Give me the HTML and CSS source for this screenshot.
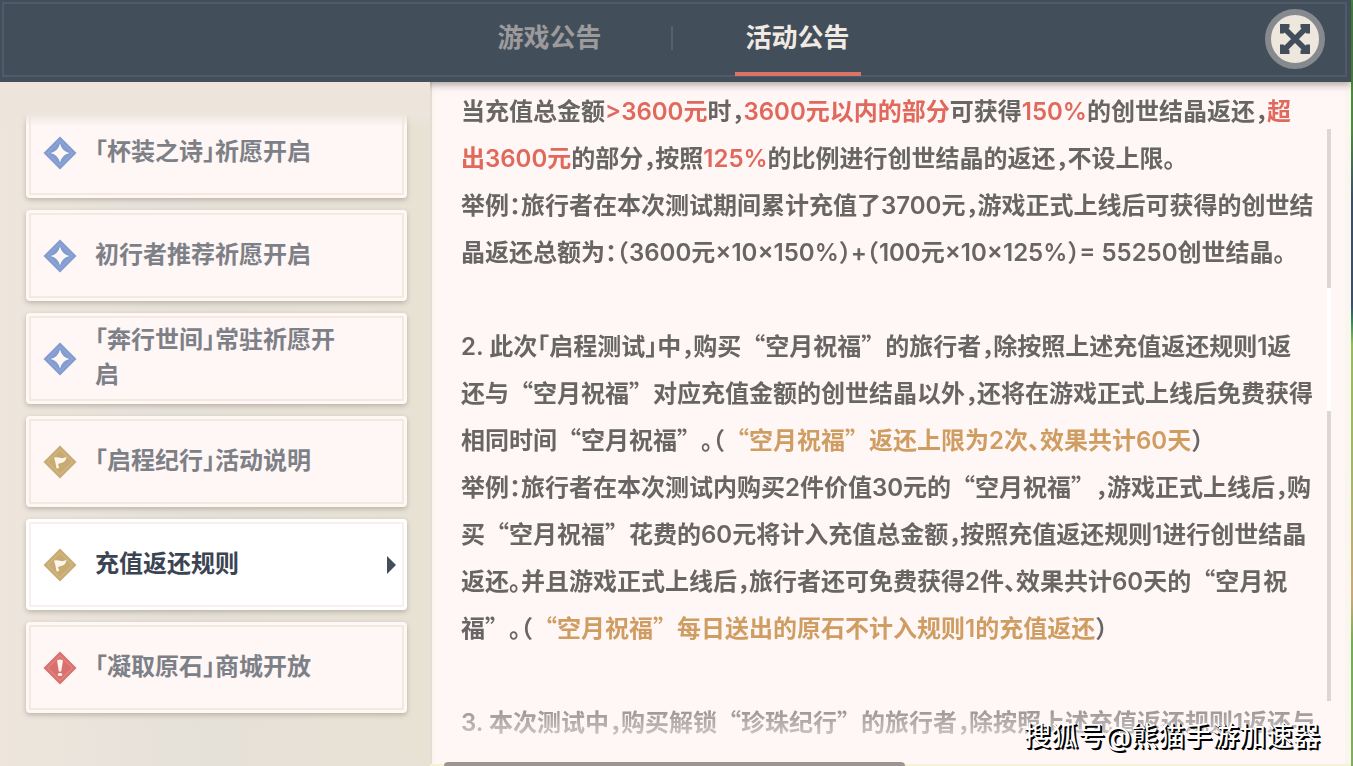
FILE: index.html
```html
<!DOCTYPE html>
<html lang="zh-CN">
<head>
    <meta charset="UTF-8">
    <meta name="viewport" content="width=device-width, initial-scale=1.0">
    <title>活动公告</title>
    <link rel="stylesheet" href="styles.css">
</head>
<body>
    <!-- 图标 -->
    <svg class="icon-defs" width="0" height="0">
        <symbol id="icon-star" viewBox="0 0 34 34">
            <path fill="#829bd0" d="M17 0.5 33.5 17 17 33.5 0.5 17Z"/>
            <path fill="none" stroke="#98add9" stroke-width="1" d="M17 4.500 29.500 17 17 29.500 4.500 17Z"/>
            <path fill="#fdf8f3" d="M17 7.5Q18.8 15.2 26.5 17 18.8 18.8 17 26.5 15.2 18.8 7.5 17 15.2 15.2 17 7.5Z"/>
        </symbol>
        <symbol id="icon-flag" viewBox="0 0 34 34">
            <path fill="#c8ab72" d="M17 0.5 33.5 17 17 33.5 0.5 17Z"/>
            <path fill="none" stroke="#d6be8d" stroke-width="1" d="M17 4.500 29.500 17 17 29.500 4.500 17Z"/>
            <path fill="#fdf6ea" d="M11 12.6Q14 11.6 17 12.8 20 14 23.5 11.8 22.8 17 19 17.8 16.5 18.2 15 19.2L16.2 23 13.6 23.4Q12.600 17 11 12.600Z"/>
        </symbol>
        <symbol id="icon-alert" viewBox="0 0 34 34">
            <path fill="#da706d" d="M17 0.5 33.5 17 17 33.5 0.5 17Z"/>
            <path fill="none" stroke="#e69692" stroke-width="1" d="M17 4.5 29.5 17 17 29.5 4.5 17Z"/>
            <path fill="#fff3ee" d="M14 9.5Q17 7.6 20 9.5L18.200 20.500H15.800Z"/>
            <ellipse fill="#fff3ee" cx="17" cy="23.600" rx="2.400" ry="1.500"/>
        </symbol>
    </svg>

    <div class="notice">
        <header class="header">
            <nav class="tabs">
                <button class="tab" type="button">游戏公告</button>
                <span class="tab-line"></span>
                <button class="tab active" type="button">活动公告</button>
            </nav>
            <button class="close" type="button" aria-label="关闭">
                <svg viewBox="0 0 30 30" width="30" height="30">
                    <path stroke="#434e5b" stroke-width="5.6" d="M5 5 25 25M25 5 5 25"/>
                    <path fill="#434e5b" d="M0 0H9.500V3.500L3.500 9.500H0ZM30 0V9.500H26.500L20.500 3.500V0ZM0 30V20.500H3.500L9.500 26.500V30ZM30 30H20.500V26.500L26.500 20.500H30Z"/>
                </svg>
            </button>
        </header>

        <main class="main">
            <!-- 左侧公告列表 -->
            <nav class="sidebar">
                <button class="item" type="button">
                    <svg class="item-icon"><use href="#icon-star"/></svg>
                    <span class="item-text">「杯装之诗」祈愿开启</span>
                </button>
                <button class="item" type="button">
                    <svg class="item-icon"><use href="#icon-star"/></svg>
                    <span class="item-text">初行者推荐祈愿开启</span>
                </button>
                <button class="item" type="button">
                    <svg class="item-icon"><use href="#icon-star"/></svg>
                    <span class="item-text">「奔行世间」常驻祈愿开启</span>
                </button>
                <button class="item" type="button">
                    <svg class="item-icon"><use href="#icon-flag"/></svg>
                    <span class="item-text">「启程纪行」活动说明</span>
                </button>
                <button class="item active" type="button">
                    <svg class="item-icon"><use href="#icon-flag"/></svg>
                    <span class="item-text">充值返还规则</span>
                    <span class="item-arrow"></span>
                </button>
                <button class="item" type="button">
                    <svg class="item-icon"><use href="#icon-alert"/></svg>
                    <span class="item-text">「凝取原石」商城开放</span>
                </button>
            </nav>

            <!-- 右侧公告内容 -->
            <section class="panel">
                <article class="content">
                    <p>当充值总金额<em class="red">&gt;3600元</em>时，<em class="red">3600元以内的部分</em>可获得<em class="red">150%</em>的创世结晶返还，<em class="red">超<br>出3600元</em>的部分，按照<em class="red">125%</em>的比例进行创世结晶的返还，不设上限。</p>
                    <p>举例：旅行者在本次测试期间累计充值了3700元，游戏正式上线后可获得的创世结<br>晶返还总额为：（3600元×10×150%）+（100元×10×125%）= 55250创世结晶。</p>
                    <br>
                    <p>2. 此次「启程测试」中，购买<span class="quote">“空月祝福”</span>的旅行者，除按照上述充值返还规则1返<br>还与<span class="quote">“空月祝福”</span>对应充值金额的创世结晶以外，还将在游戏正式上线后免费获得<br>相同时间<span class="quote">“空月祝福”</span>。（<em class="gold"><span class="quote">“空月祝福”</span>返还上限为2次、效果共计60天</em>）</p>
                    <p>举例：旅行者在本次测试内购买2件价值30元的<span class="quote">“空月祝福”</span>，游戏正式上线后，购<br>买<span class="quote">“空月祝福”</span>花费的60元将计入充值总金额，按照充值返还规则1进行创世结晶<br>返还。并且游戏正式上线后，旅行者还可免费获得2件、效果共计60天的<span class="quote">“空月祝<br>福”</span>。（<em class="gold"><span class="quote">“空月祝福”</span>每日送出的原石不计入规则1的充值返还</em>）</p>
                    <br>
                    <p>3. 本次测试中，购买解锁<span class="quote">“珍珠纪行”</span>的旅行者，除按照上述充值返还规则1返还与</p>
                </article>
                <div class="scrollbar"><div class="scrollbar-thumb"></div></div>
                <div class="bottom-bar"></div>
            </section>
        </main>
    </div>
    <div class="watermark">搜狐号@熊猫手游加速器</div>
</body>
</html>
```
FILE: styles.css
```css
* {
    box-sizing: border-box;
}

body {
    margin: 0;
    height: 100vh;
    overflow: hidden;
    padding-right: 2px;
    /* 右侧露出的游戏场景 */
    background: linear-gradient(#3f8a3a 0, #4c8a3c 17%, #39506b 26%, #39506b 40%, #2f8a55 42%, #93bd55 45%, #a3b860 62%, #c9a878 78%, #6fb04a 84%, #7fae5c 100%);
    font-family: Inter, "Noto Sans CJK SC", sans-serif;
    font-weight: 600;
    color: #686664;
}

button {
    border: none;
    padding: 0;
    font-family: inherit;
    font-weight: inherit;
    cursor: pointer;
}

.icon-defs {
    position: absolute;
}

.notice {
    display: flex;
    flex-direction: column;
    height: 100%;
}

/* 顶部 */
.header {
    display: grid;
    grid-template-columns: 1fr auto 1fr;
    height: 82px;
    padding: 2px 4px 4px 0;
    background-color: #434e5b;
    box-shadow: 0 2px 8px rgba(70, 60, 50, .5);
    position: relative;
    z-index: 1;
}

.header::before {
    content: "";
    position: absolute;
    inset: 2px 4px 5px 2px;
    border: 2px solid #4f5b6a;
    pointer-events: none;
}

.tabs {
    grid-column: 2;
    display: flex;
    align-items: flex-start;
}

.tab {
    width: 126px;
    height: 74px;
    padding-bottom: 4px;
    background: none;
    border-bottom: 4px solid transparent;
    font-size: 26px;
    color: #9c9a9b;
    position: relative;
}

.tab.active {
    color: #f1eae3;
    border-color: #dc7466;
}

.tab-line {
    width: 2px;
    height: 24px;
    margin: 24px 62px 0 58px;
    background-color: #566170;
}

.close {
    display: flex;
    align-items: center;
    justify-content: center;
    justify-self: end;
    width: 60px;
    height: 60px;
    margin: 7px 22px 0 0;
    border: 6px solid #868a8f;
    border-radius: 50%;
    background-color: #eee7de;
}

.main {
    flex: 1;
    display: flex;
    min-height: 0;
}

/* 左侧列表 */
.sidebar {
    display: flex;
    flex-direction: column;
    gap: 12px;
    width: 430px;
    padding: 25px 23px 0 26px;
    background: linear-gradient(90deg, #eee6dd, #e6e1d9 40%, #e8e2d5);
    position: relative;
}

/* 列表顶部渐隐 */
.sidebar::before {
    content: "";
    position: absolute;
    z-index: 1;
    top: 0;
    left: 0;
    right: 0;
    height: 44px;
    background: linear-gradient(#ede5dc 32px, rgba(237, 229, 220, 0));
}

.item {
    display: flex;
    align-items: center;
    height: 91px;
    padding: 0 11px 0 17px;
    border-radius: 4px;
    background-color: #fff6f6;
    box-shadow: 0 2px 5px rgba(120, 105, 90, .4);
    outline: 2px solid #f5e9df;
    outline-offset: -5px;
    text-align: left;
    color: #7d8187;
}

.item-icon {
    flex: none;
    width: 34px;
    height: 34px;
    margin-right: 18px;
}

.item-text {
    width: 250px;
    padding-bottom: 3px;
    font-size: 24px;
    line-height: 35px;
    font-feature-settings: "halt";
}

.item.active {
    background-color: #fff;
    outline-color: #f7f0ec;
    color: #3b4452;
}

.item-arrow {
    margin-left: auto;
    border: solid transparent;
    border-width: 9px 0 9px 9px;
    border-left-color: #434e5b;
}

/* 右侧内容 */
.panel {
    flex: 1;
    display: flex;
    min-width: 0;
    padding: 6px 20px 0 31px;
    background-color: #fff6f6;
    border-bottom: 2px solid #f6f2d4;
    box-shadow: inset 2px 0 0 #e3ddd5, inset 5px 0 0 #fbf5f0, inset -6px 0 0 #fbf5ef;
    position: relative;
}

.content {
    flex: 1;
    min-width: 0;
    overflow: hidden;
    white-space: nowrap;
    font-size: 24px;
    line-height: 47px;
    font-feature-settings: "halt";
    text-spacing-trim: space-all;
    -webkit-mask-image: linear-gradient(#000 595px, transparent 675px);
    mask-image: linear-gradient(#000 595px, transparent 675px);
}

.content p {
    margin: 0;
}

.content em {
    font-style: normal;
}

.red {
    color: #e0695c;
}

.gold {
    color: #cf9d62;
}

.quote {
    font-family: "Noto Sans CJK SC", sans-serif;
    font-feature-settings: normal;
    line-height: 1;
}

.scrollbar {
    flex: none;
    width: 4px;
    height: calc(100% - 104px);
    margin-top: 41px;
    padding-top: 159px;
    background-color: #ddd5d6;
}

.scrollbar-thumb {
    height: 123px;
    background-color: #fff;
}

.bottom-bar {
    position: absolute;
    left: 14px;
    bottom: -2px;
    width: 50%;
    height: 4px;
    border-radius: 4px 4px 0 0;
    background-color: #9c9692;
}

.watermark {
    position: absolute;
    right: 33px;
    bottom: 9px;
    font-size: 27px;
    font-weight: 400;
    line-height: 40px;
    color: #fff;
    text-shadow: 1px 1px 0 #000, 2px 2px 0 #000;
    z-index: 2;
}
```
